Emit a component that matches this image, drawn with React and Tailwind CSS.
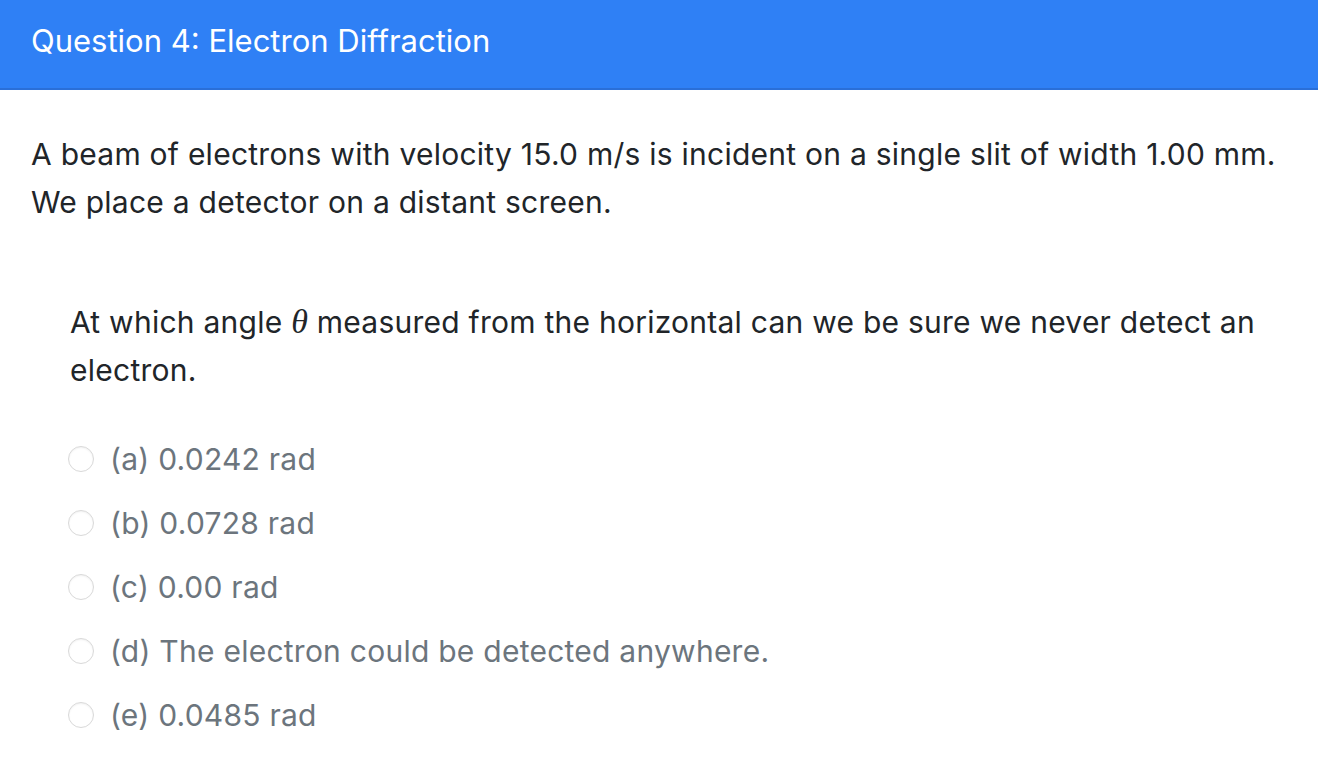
const options = [
  '(a) 0.0242 rad',
  '(b) 0.0728 rad',
  '(c) 0.00 rad',
  '(d) The electron could be detected anywhere.',
  '(e) 0.0485 rad',
];

export default function App() {
  return (
    <div className="min-h-[780px] bg-white font-['Inter','Noto_Sans',sans-serif]">
      {/* Header */}
      <div className="h-[90px] bg-[#2f80f5] border-b-2 border-[#2a6fd8] px-[31px] flex items-center">
        <h1 className="text-white text-[31px] leading-none pb-[8px]">Question 4: Electron Diffraction</h1>
      </div>

      {/* Body */}
      <div className="px-[31px] pt-[40px]">
        <p className="text-[#212529] text-[30px] leading-[48px] tracking-[0.25px]">
          A beam of electrons with velocity 15.0 m/s is incident on a single slit of width 1.00 mm.
          <br />
          We place a detector on a distant screen.
        </p>

        <div className="pl-[39px] pt-[72px]">
          <p className="text-[#212529] text-[30px] leading-[48px] tracking-[0.25px]">
            At which angle <span className="font-['Liberation_Serif',serif] italic text-[34px]">θ</span> measured from the horizontal can we be sure we never detect an
            <br />
            electron.
          </p>

          <div className="pt-[33px] flex flex-col">
            {options.map((o) => (
              <label key={o} className="flex items-center h-[64px] -ml-[2px]">
                <span className="w-[26px] h-[26px] rounded-full border border-[#d9d9d9] bg-white shadow-[inset_0_1px_2px_rgba(0,0,0,0.06)]" />
                <span className="ml-[16px] text-[#6c757d] text-[30px] leading-none tracking-[0.25px]">{o}</span>
              </label>
            ))}
          </div>
        </div>
      </div>
    </div>
  );
}
